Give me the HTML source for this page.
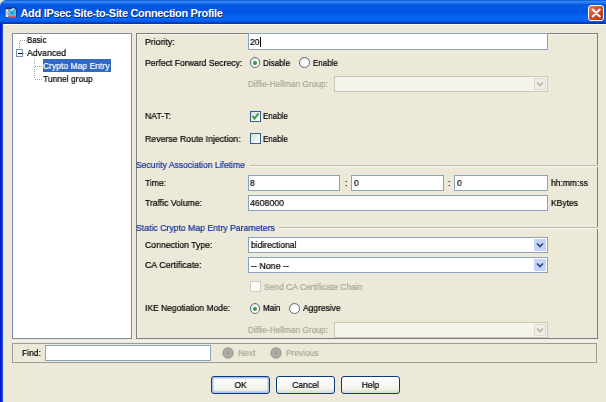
<!DOCTYPE html>
<html>
<head>
<meta charset="utf-8">
<style>
html,body{margin:0;padding:0;}
html{background:#fff;}
body{width:606px;height:402px;overflow:hidden;background:#ece9d8;position:relative;font-family:"Liberation Sans",sans-serif;font-size:9.5px;color:#000;}
.a{position:absolute;white-space:nowrap;}
.t{line-height:12px;height:12px;-webkit-text-stroke:0.22px currentColor;transform-origin:0 0;will-change:transform;}
.w{color:#fff;}
.gray{color:#a9a798;}
.blue{color:#12339c;}
#tb{left:0;top:0;width:612px;height:24px;border-top-left-radius:6px;background:linear-gradient(to bottom,#0a4fce 0,#2f85f5 1.5px,#2a7ff5 2.5px,#0459e2 4.5px,#0055e0 13px,#0362ee 15px,#0866f5 20px,#0558e8 21.5px,#0238b8 23px,#0238b8 24px);}
#wl{left:4px;top:24px;width:603px;height:1px;background:#fbfaf6;}
#title{left:20.5px;top:6px;color:#fff;font-weight:bold;font-size:11px;letter-spacing:-0.32px;line-height:14px;text-shadow:1px 1px 0 #0a2a80;}
#bl{left:0;top:24px;width:4px;height:378px;background:linear-gradient(to right,#0019cf 0,#0521cf 1.4px,#2350d6 2.6px,#3d68dc 3px,#d3e0f4 3px,#e4eaec 4px);}
#close{left:588px;top:5px;width:16px;height:16px;box-sizing:border-box;border:1px solid #fff;border-radius:3px;background:linear-gradient(135deg,#e8805c,#d2471f 50%,#b8320f);}
.pane{border:1px solid #858a90;box-sizing:border-box;}
#lp{left:12px;top:33px;width:120px;height:306px;background:#fff;border-color:#7f8b98;}
#rp{left:136px;top:33px;width:462px;height:306px;border-color:#7c7e80;box-shadow:inset 1px 1px 0 #f6f5ee;}
#fp{left:12px;top:343px;width:585px;height:20px;border-color:#9c9c94;}
.inp{background:#fff;border:1px solid #8ba3bd;box-sizing:border-box;height:16px;}
.sel{background:#fff;border:1px solid #8ba3bd;box-sizing:border-box;height:16px;}
.sel.dis{background:#f5f4ea;border-color:#c9c7ba;}
.hr{height:1px;background:#bdbaab;box-shadow:0 1px 0 #f8f7f0;}
.rad{width:10.6px;height:10.6px;border-radius:50%;border:1.2px solid #5a6f84;box-sizing:border-box;background:radial-gradient(circle at 58% 58%,#fff 35%,#d8d8cc);}
.rad.on::after{content:"";position:absolute;left:2.3px;top:2.3px;width:4px;height:4px;border-radius:50%;background:radial-gradient(#3fae3f,#1c7a1c);}
.cb{width:11px;height:11px;border:1px solid #3a5f8a;box-sizing:border-box;background:linear-gradient(135deg,#dcdcd0,#fff);}
.cb.dis{border-color:#cfcdc0;background:#fbfbf8;}
.btn{height:18px;box-sizing:border-box;border:1px solid #0c3a7a;border-radius:3px;background:linear-gradient(#fff,#f3f2ea 75%,#dcd8cc);}
.btn.def{box-shadow:inset 0 0 0 1.5px #a9c2f0;}
.arr{width:12px;height:12.5px;background:#c3d3fb;border-radius:1px;}
.arr.dis{background:#efeee4;border:1px solid #dddbd0;box-sizing:border-box;}
</style>
</head>
<body>
<div class="a" id="tb"></div>
<div class="a" id="title">Add IPsec Site-to-Site Connection Profile</div>
<div class="a" id="bl"></div><div class="a" id="wl"></div>
<div class="a" id="close"><svg width="14" height="14" viewBox="0 0 14 14" style="display:block"><path d="M3.7 3.5L10.7 10.5M10.7 3.5L3.7 10.5" stroke="#fff" stroke-width="2.1" stroke-linecap="round"/></svg></div>
<svg class="a" style="left:4px;top:6px" width="14" height="13" viewBox="4 6 14 13"><rect x="4.8" y="7.2" width="12" height="10.8" rx="1" fill="#17308a" opacity="0.85"/><rect x="5.6" y="9.3" width="3" height="7.8" fill="#f4f6fb"/><rect x="6.4" y="11" width="1.2" height="4" fill="#8fa6d8"/><rect x="9" y="9.3" width="7" height="7" fill="#45c6d6"/><circle cx="12.3" cy="13" r="1.7" fill="#3b8de0"/><rect x="8.6" y="16.2" width="7.4" height="1.6" fill="#ea5a5c"/><path d="M10.5 10.2L14.2 8.2" stroke="#fff" stroke-width="1.2"/></svg>

<div class="a pane" id="lp"></div>
<div class="a pane" id="rp"></div>
<div class="a pane" id="fp"></div>
<div class="a" style="left:12px;top:340px;width:586px;height:2px;background:#f2f1e9;"></div>

<svg class="a" style="left:12px;top:34px" width="40" height="60" viewBox="12 34 40 60" shape-rendering="crispEdges">
<g stroke="#a0a0a0" stroke-width="1" stroke-dasharray="1 1" fill="none">
<path d="M19.5 40.5H27"/><path d="M19.5 41V50"/><path d="M23 53.5H27"/>
<path d="M34.5 59V79"/><path d="M35 66.5H42"/><path d="M35 79.5H42"/>
</g>
<rect x="16.5" y="49.5" width="6" height="7" fill="#fff" stroke="#7890b0"/>
<path d="M18 53.5H21.5" stroke="#000" stroke-width="1"/>
</svg>
<div class="a" style="left:43px;top:59px;width:68px;height:13px;background:#316ac5;"></div>

<div class="a inp" style="left:248px;top:33px;width:300px;height:17px;"></div>
<div class="a" style="left:259.5px;top:37px;width:1px;height:10px;background:#000;"></div>
<div class="a rad on" style="left:249.5px;top:57.4px;"></div>
<div class="a rad" style="left:299.4px;top:57.4px;"></div>
<div class="a sel dis" style="left:334px;top:76px;width:214px;"></div>
<div class="a arr dis" style="left:534px;top:77.5px"><svg width="12" height="13" viewBox="0 0 12 13" style="display:block;position:absolute;left:-1px;top:-1px"><path d="M3 4.5L6 7.5L9 4.5" fill="none" stroke="#b5b3a6" stroke-width="1.7"/></svg></div>
<div class="a cb" style="left:250px;top:111px;"><svg width="9" height="9" viewBox="0 0 9 9" style="display:block"><path d="M1.5 4L3.5 6.5L7.5 1.5" fill="none" stroke="#21a121" stroke-width="1.8"/></svg></div>
<div class="a cb" style="left:250px;top:133px;"></div>
<div class="a hr" style="left:250px;top:165px;width:348px;"></div>
<div class="a inp" style="left:248px;top:175px;width:92px;"></div>
<div class="a inp" style="left:351px;top:175px;width:93px;"></div>
<div class="a inp" style="left:454px;top:175px;width:94px;"></div>
<div class="a inp" style="left:248px;top:195px;width:300px;"></div>
<div class="a hr" style="left:279px;top:227px;width:319px;"></div>
<div class="a sel" style="left:248px;top:237px;width:300px;"></div>
<div class="a arr " style="left:534.2px;top:238.7px"><svg width="12" height="13" viewBox="0 0 12 13" style="display:block;position:absolute;left:0;top:0"><path d="M3 4.5L6 7.5L9 4.5" fill="none" stroke="#34457f" stroke-width="1.7"/></svg></div>
<div class="a sel" style="left:248px;top:257px;width:300px;"></div>
<div class="a arr " style="left:534.2px;top:258.7px"><svg width="12" height="13" viewBox="0 0 12 13" style="display:block;position:absolute;left:0;top:0"><path d="M3 4.5L6 7.5L9 4.5" fill="none" stroke="#34457f" stroke-width="1.7"/></svg></div>
<div class="a cb dis" style="left:250px;top:281px;"></div>
<div class="a rad on" style="left:249.5px;top:303.4px;"></div>
<div class="a rad" style="left:289.4px;top:303.4px;"></div>
<div class="a sel dis" style="left:334px;top:322px;width:214px;"></div>
<div class="a arr dis" style="left:534px;top:323.5px"><svg width="12" height="13" viewBox="0 0 12 13" style="display:block;position:absolute;left:-1px;top:-1px"><path d="M3 4.5L6 7.5L9 4.5" fill="none" stroke="#b5b3a6" stroke-width="1.7"/></svg></div>
<div class="a inp" style="left:45px;top:345px;width:166px;"></div>
<svg class="a" style="left:222px;top:347px" width="12" height="12" viewBox="0 0 12 12"><circle cx="6" cy="6" r="5.7" fill="#a09f98"/><circle cx="6" cy="6" r="3" fill="none" stroke="#b8b7b0" stroke-width="1.2"/></svg>
<svg class="a" style="left:270px;top:347px" width="12" height="12" viewBox="0 0 12 12"><circle cx="6" cy="6" r="5.7" fill="#a09f98"/><circle cx="6" cy="6" r="3" fill="none" stroke="#b8b7b0" stroke-width="1.2"/></svg>

<div class="a btn def" style="left:211px;top:376px;width:59px;"></div>
<div class="a btn" style="left:276px;top:376px;width:59px;"></div>
<div class="a btn" style="left:341px;top:376px;width:59px;"></div>
<div class="a t" style="left:211px;width:59px;text-align:center;top:379px;transform-origin:50% 0;transform:scaleX(0.9)">OK</div>
<div class="a t" style="left:276px;width:59px;text-align:center;top:379px;transform-origin:50% 0;transform:scaleX(0.9)">Cancel</div>
<div class="a t" style="left:341px;width:59px;text-align:center;top:379px;transform-origin:50% 0;transform:scaleX(0.9)">Help</div>
<div class="a t " style="left:27.4px;top:34.20px;transform:scaleX(0.840)">Basic</div>
<div class="a t " style="left:27.4px;top:47.20px;transform:scaleX(0.923)">Advanced</div>
<div class="a t w" style="left:43.2px;top:60.30px;transform:scaleX(0.900)">Crypto Map Entry</div>
<div class="a t " style="left:43.2px;top:73.30px;transform:scaleX(0.895)">Tunnel group</div>
<div class="a t " style="left:144.8px;top:36.00px;transform:scaleX(0.922)">Priority:</div>
<div class="a t " style="left:250.3px;top:36.20px;transform:scaleX(0.895)">20</div>
<div class="a t " style="left:144.8px;top:57.00px;transform:scaleX(0.908)">Perfect Forward Secrecy:</div>
<div class="a t " style="left:263.0px;top:57.00px;transform:scaleX(0.852)">Disable</div>
<div class="a t " style="left:312.5px;top:57.00px;transform:scaleX(0.841)">Enable</div>
<div class="a t gray" style="left:248.0px;top:78.40px;transform:scaleX(0.877)">Diffie-Hellman Group:</div>
<div class="a t " style="left:144.8px;top:109.90px;transform:scaleX(0.911)">NAT-T:</div>
<div class="a t " style="left:262.7px;top:110.20px;transform:scaleX(0.841)">Enable</div>
<div class="a t " style="left:144.8px;top:132.80px;transform:scaleX(0.919)">Reverse Route Injection:</div>
<div class="a t " style="left:262.7px;top:132.80px;transform:scaleX(0.841)">Enable</div>
<div class="a t blue" style="left:136.2px;top:159.00px;transform:scaleX(0.900)">Security Association Lifetime</div>
<div class="a t " style="left:144.8px;top:176.70px;transform:scaleX(0.895)">Time:</div>
<div class="a t " style="left:250.3px;top:176.70px;transform:scaleX(0.895)">8</div>
<div class="a t " style="left:345.0px;top:176.70px;transform:scaleX(0.895)">:</div>
<div class="a t " style="left:353.5px;top:176.70px;transform:scaleX(0.895)">0</div>
<div class="a t " style="left:448.0px;top:176.70px;transform:scaleX(0.895)">:</div>
<div class="a t " style="left:456.8px;top:176.70px;transform:scaleX(0.895)">0</div>
<div class="a t " style="left:551.0px;top:176.70px;transform:scaleX(0.895)">hh:mm:ss</div>
<div class="a t " style="left:144.8px;top:196.80px;transform:scaleX(0.907)">Traffic Volume:</div>
<div class="a t " style="left:250.3px;top:196.80px;transform:scaleX(0.919)">4608000</div>
<div class="a t " style="left:551.0px;top:196.80px;transform:scaleX(0.895)">KBytes</div>
<div class="a t blue" style="left:136.2px;top:221.70px;transform:scaleX(0.913)">Static Crypto Map Entry Parameters</div>
<div class="a t " style="left:144.8px;top:239.10px;transform:scaleX(0.914)">Connection Type:</div>
<div class="a t " style="left:250.6px;top:239.10px;transform:scaleX(0.895)">bidirectional</div>
<div class="a t " style="left:144.8px;top:259.20px;transform:scaleX(0.932)">CA Certificate:</div>
<div class="a t " style="left:250.6px;top:259.60px;transform:scaleX(0.932)">-- None --</div>
<div class="a t gray" style="left:263.5px;top:280.60px;transform:scaleX(0.892)">Send CA Certificate Chain</div>
<div class="a t " style="left:144.8px;top:302.10px;transform:scaleX(0.895)">IKE Negotiation Mode:</div>
<div class="a t " style="left:263.0px;top:302.10px;transform:scaleX(0.840)">Main</div>
<div class="a t " style="left:303.4px;top:302.10px;transform:scaleX(0.888)">Aggresive</div>
<div class="a t gray" style="left:248.0px;top:324.40px;transform:scaleX(0.877)">Diffie-Hellman Group:</div>
<div class="a t " style="left:21.8px;top:347.40px;transform:scaleX(0.890)">Find:</div>
<div class="a t gray" style="left:237.6px;top:347.40px;transform:scaleX(0.890)">Next</div>
<div class="a t gray" style="left:285.5px;top:347.40px;transform:scaleX(0.879)">Previous</div>
</body>
</html>
